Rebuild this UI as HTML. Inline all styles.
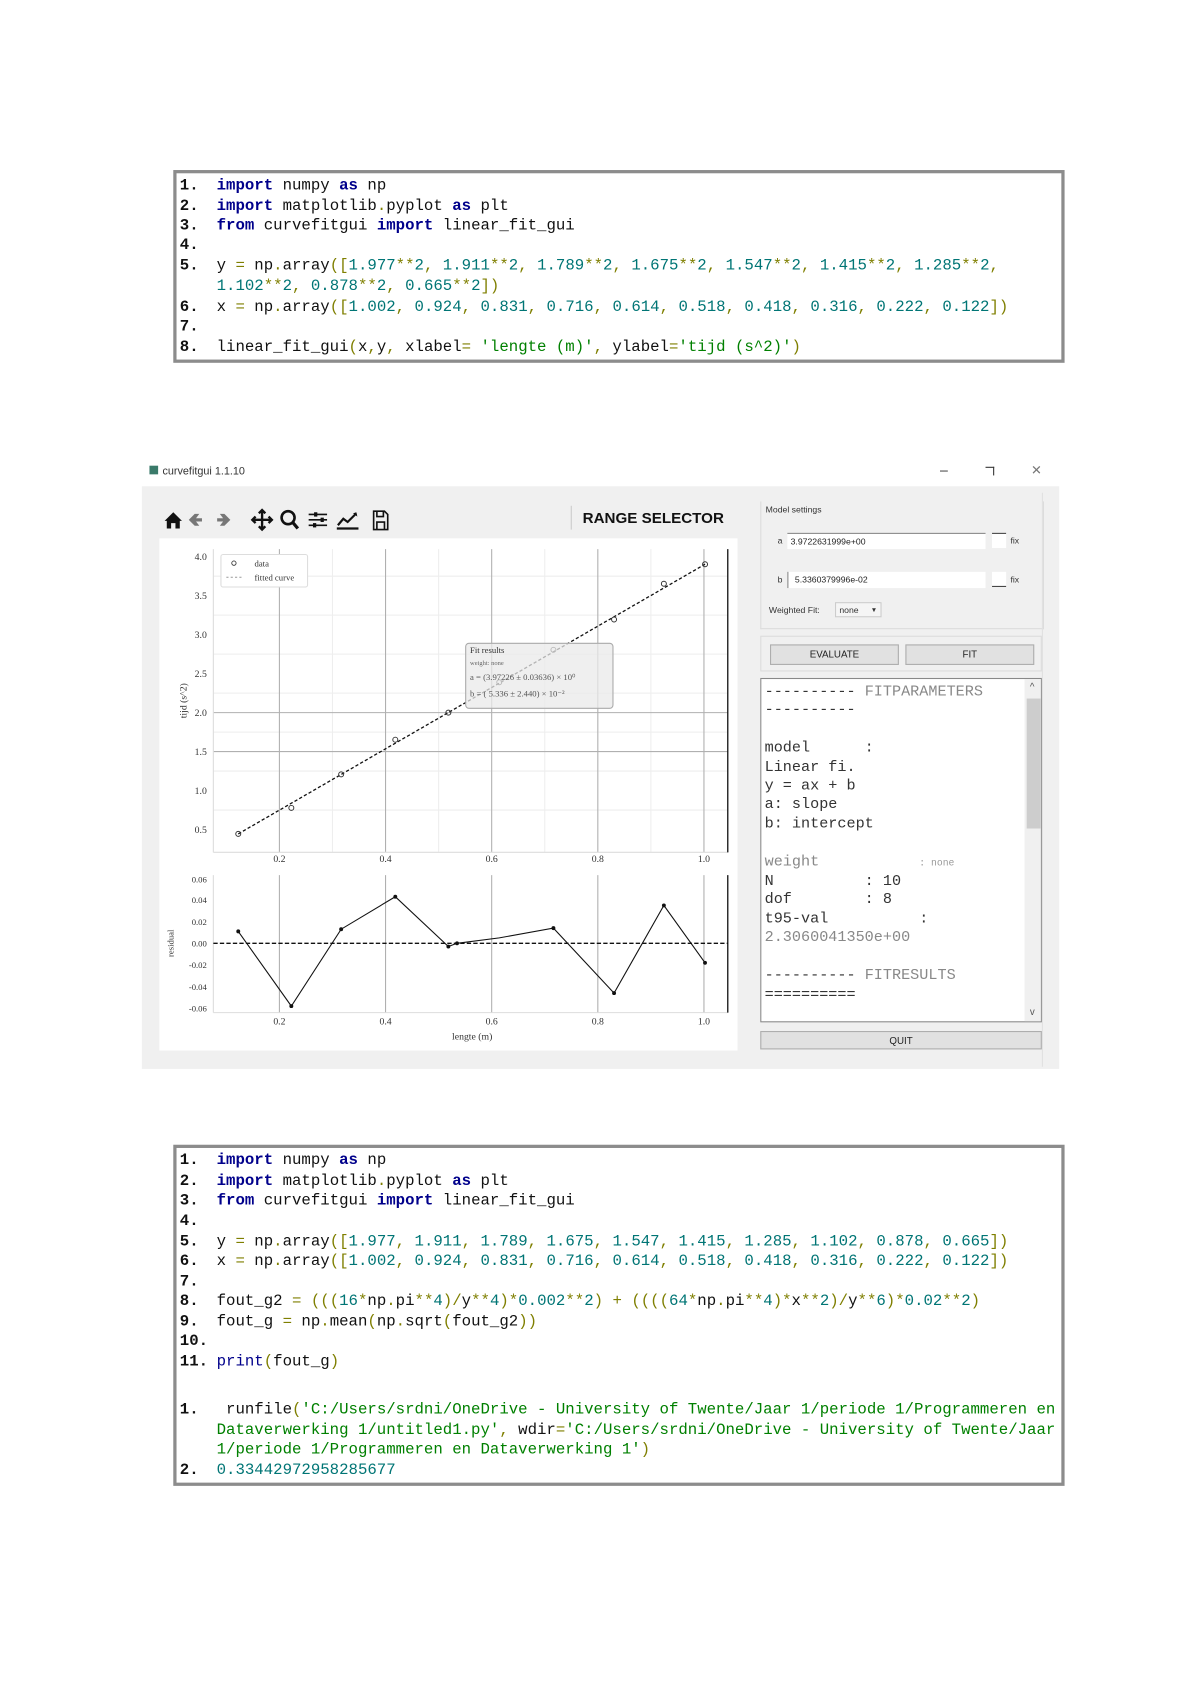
<!DOCTYPE html>
<html><head><meta charset="utf-8">
<style>
html,body{margin:0;padding:0;background:#fff;}
body{width:1200px;height:1698px;overflow:hidden;position:relative;}
#w{position:absolute;left:0;top:0;width:1108px;height:1568px;transform:scale(1.0830);transform-origin:0 0;}
.box{position:absolute;border:3px solid #8c8c8c;box-sizing:border-box;background:#fff;}
.ln{position:absolute;font-family:"Liberation Mono",monospace;font-size:14.5px;letter-spacing:0;white-space:pre;color:#111;line-height:18px;}
.n{font-weight:bold;position:absolute;left:-34px;}
.k{color:#00008b;font-weight:bold;}
.d{color:#007575;}
.p{color:#7f7f00;}
.s{color:#008000;}
.ab{position:absolute;}
.t{font-family:"Liberation Sans",sans-serif;}
.mono{font-family:"Liberation Mono",monospace;font-size:14px;color:#333;position:absolute;left:3px;white-space:pre;line-height:17.4px;}
.btn{position:absolute;background:#e1e1e1;border:1px solid #adadad;font-family:"Liberation Sans",sans-serif;font-size:9px;text-align:center;color:#222;}
</style></head><body>
<div id="w">

<div class="box" style="left:160px;top:157px;width:823px;height:178px;"></div>
<div class="ln" style="left:200px;top:163px"><span class="n">1.</span><span class="k">import</span> numpy <span class="k">as</span> np</div>
<div class="ln" style="left:200px;top:182px"><span class="n">2.</span><span class="k">import</span> matplotlib<span class="p">.</span>pyplot <span class="k">as</span> plt</div>
<div class="ln" style="left:200px;top:200px"><span class="n">3.</span><span class="k">from</span> curvefitgui <span class="k">import</span> linear_fit_gui</div>
<div class="ln" style="left:200px;top:218px"><span class="n">4.</span></div>
<div class="ln" style="left:200px;top:237px"><span class="n">5.</span>y <span class="p">=</span> np<span class="p">.</span>array<span class="p">([</span><span class="d">1.977</span><span class="p">**</span><span class="d">2</span><span class="p">,</span> <span class="d">1.911</span><span class="p">**</span><span class="d">2</span><span class="p">,</span> <span class="d">1.789</span><span class="p">**</span><span class="d">2</span><span class="p">,</span> <span class="d">1.675</span><span class="p">**</span><span class="d">2</span><span class="p">,</span> <span class="d">1.547</span><span class="p">**</span><span class="d">2</span><span class="p">,</span> <span class="d">1.415</span><span class="p">**</span><span class="d">2</span><span class="p">,</span> <span class="d">1.285</span><span class="p">**</span><span class="d">2</span><span class="p">,</span></div>
<div class="ln" style="left:200px;top:256px"><span class="d">1.102</span><span class="p">**</span><span class="d">2</span><span class="p">,</span> <span class="d">0.878</span><span class="p">**</span><span class="d">2</span><span class="p">,</span> <span class="d">0.665</span><span class="p">**</span><span class="d">2</span><span class="p">])</span></div>
<div class="ln" style="left:200px;top:275px"><span class="n">6.</span>x <span class="p">=</span> np<span class="p">.</span>array<span class="p">([</span><span class="d">1.002</span><span class="p">,</span> <span class="d">0.924</span><span class="p">,</span> <span class="d">0.831</span><span class="p">,</span> <span class="d">0.716</span><span class="p">,</span> <span class="d">0.614</span><span class="p">,</span> <span class="d">0.518</span><span class="p">,</span> <span class="d">0.418</span><span class="p">,</span> <span class="d">0.316</span><span class="p">,</span> <span class="d">0.222</span><span class="p">,</span> <span class="d">0.122</span><span class="p">])</span></div>
<div class="ln" style="left:200px;top:293px"><span class="n">7.</span></div>
<div class="ln" style="left:200px;top:312px"><span class="n">8.</span>linear_fit_gui<span class="p">(</span>x<span class="p">,</span>y<span class="p">,</span> xlabel<span class="p">=</span> <span class="s">'lengte (m)'</span><span class="p">,</span> ylabel<span class="p">=</span><span class="s">'tijd (s^2)'</span><span class="p">)</span></div>

<div class="ab t" style="left:138px;top:430px;font-size:10px;color:#333;"><span style="display:inline-block;width:8px;height:8px;background:#3a7a6a;margin-right:4px;"></span>curvefitgui 1.1.10</div>
<div class="ab t" style="left:868px;top:426px;font-size:13px;color:#333;">–</div>
<div class="ab" style="left:910px;top:431px;width:7px;height:7px;border-top:1.5px solid #333;border-right:1.5px solid #333;"></div>
<div class="ab t" style="left:952px;top:427px;font-size:12px;color:#777;">✕</div>

<div class="ab" style="left:131px;top:449px;width:847px;height:538px;background:#f0f0f0;"></div>

<svg class="ab" style="left:150px;top:469px" width="215" height="22" viewBox="0 0 215 22">
 <path d="M2 12 L10 4 L18 12 L16 12 L16 19 L12 19 L12 14 L8 14 L8 19 L4 19 L4 12 Z" fill="#111"/>
 <path d="M36 10 L30 10 L33 6 L30 6 L25 11 L30 16 L33 16 L30 12 L36 12 Z" fill="#777" stroke="#777" stroke-width="1"/>
 <path d="M51 10 L57 10 L54 6 L57 6 L62 11 L57 16 L54 16 L57 12 L51 12 Z" fill="#777" stroke="#777" stroke-width="1"/>
 <path d="M92 2 L92 20 M83 11 L101 11 M89 5 L92 2 L95 5 M89 17 L92 20 L95 17 M86 8 L83 11 L86 14 M98 8 L101 11 L98 14" stroke="#111" stroke-width="2.2" fill="none"/>
 <circle cx="116" cy="9" r="6" stroke="#111" stroke-width="2.4" fill="none"/>
 <path d="M120 13 L125 19" stroke="#111" stroke-width="3"/>
 <path d="M135 6 H152 M135 11 H152 M135 16 H152" stroke="#111" stroke-width="1.5"/>
 <rect x="140" y="4" width="3" height="4" fill="#111"/><rect x="146" y="9" width="3" height="4" fill="#111"/><rect x="139" y="14" width="3" height="4" fill="#111"/>
 <path d="M161 19 H181 M162 16 L167 10 L171 13 L179 5" stroke="#111" stroke-width="2" fill="none"/>
 <path d="M179 4 L180 8 L176 5 Z" fill="#111"/>
 <path d="M195 3 H205 L208 6 V20 H195 Z M198 3 V8 H204 V3 M198 20 V13 H205 V20" stroke="#111" stroke-width="1.5" fill="none"/>
</svg>
<div class="ab" style="left:527px;top:467px;width:1px;height:22px;background:#ccc;"></div>
<div class="ab t" style="left:538px;top:470px;font-size:14px;font-weight:bold;color:#111;">RANGE SELECTOR</div>

<svg class="ab" style="left:147px;top:497px" width="534" height="473" viewBox="147 497 534 473" font-family="Liberation Serif, serif">
 <rect x="147" y="497" width="534" height="473" fill="#fff"/>
 <g stroke="#eee" stroke-width="1">
  <line x1="197" y1="532" x2="672" y2="532"/><line x1="197" y1="568" x2="672" y2="568"/><line x1="197" y1="604" x2="672" y2="604"/><line x1="197" y1="640" x2="672" y2="640"/><line x1="197" y1="676" x2="672" y2="676"/><line x1="197" y1="712" x2="672" y2="712"/><line x1="197" y1="748" x2="672" y2="748"/>
  <line x1="307" y1="507" x2="307" y2="787"/><line x1="405" y1="507" x2="405" y2="787"/><line x1="503" y1="507" x2="503" y2="787"/><line x1="601" y1="507" x2="601" y2="787"/>
 </g>
 <g stroke="#b0b0b0" stroke-width="1">
  <line x1="258" y1="507" x2="258" y2="787"/><line x1="356" y1="507" x2="356" y2="787"/><line x1="454" y1="507" x2="454" y2="787"/><line x1="552" y1="507" x2="552" y2="787"/><line x1="650" y1="507" x2="650" y2="787"/>
  <line x1="197" y1="658" x2="672" y2="658"/><line x1="197" y1="694" x2="672" y2="694"/>
 </g>
 <line x1="197" y1="507" x2="197" y2="787" stroke="#ddd"/>
 <line x1="197" y1="787" x2="672" y2="787" stroke="#ddd"/>
 <line x1="672" y1="507" x2="672" y2="787" stroke="#111" stroke-width="1.2"/>
 <g font-size="9" fill="#333" text-anchor="end">
  <text x="191" y="517">4.0</text><text x="191" y="553">3.5</text><text x="191" y="589">3.0</text><text x="191" y="625">2.5</text><text x="191" y="661">2.0</text><text x="191" y="697">1.5</text><text x="191" y="733">1.0</text><text x="191" y="769">0.5</text>
 </g>
 <g font-size="9" fill="#333" text-anchor="middle">
  <text x="258" y="796">0.2</text><text x="356" y="796">0.4</text><text x="454" y="796">0.6</text><text x="552" y="796">0.8</text><text x="650" y="796">1.0</text>
 </g>
 <text x="172" y="647" font-size="9" fill="#333" transform="rotate(-90 172 647)" text-anchor="middle">tijd (s^2)</text>
 <rect x="204" y="512" width="80" height="30" fill="#fff" stroke="#ddd" rx="2"/>
 <circle cx="216" cy="520" r="2" fill="none" stroke="#333" stroke-width="0.8"/>
 <text x="235" y="523" font-size="8" fill="#333">data</text>
 <line x1="209" y1="533" x2="224" y2="533" stroke="#999" stroke-dasharray="2,2"/>
 <text x="235" y="536" font-size="8" fill="#333">fitted curve</text>
 <line x1="220" y1="770" x2="651" y2="521" stroke="#111" stroke-width="1.2" stroke-dasharray="3,2"/>
 <g fill="none" stroke="#333" stroke-width="0.9">
  <circle cx="651" cy="521" r="2.3"/><circle cx="613" cy="539" r="2.3"/><circle cx="567" cy="572" r="2.3"/><circle cx="511" cy="600" r="2.3"/><circle cx="461" cy="630" r="2.3"/><circle cx="414" cy="658" r="2.3"/><circle cx="365" cy="683" r="2.3"/><circle cx="315" cy="715" r="2.3"/><circle cx="269" cy="746" r="2.3"/><circle cx="220" cy="770" r="2.3"/>
 </g>
 <rect x="430" y="594" width="136" height="60" rx="3" fill="#eaeaea" fill-opacity="0.75" stroke="#aaa"/>
 <text x="434" y="603" font-size="8" fill="#333">Fit results</text>
 <text x="434" y="614" font-size="6" fill="#666">weight: none</text>
 <text x="434" y="628" font-size="8" fill="#555">a = (3.97226 ± 0.03636) × 10⁰</text>
 <text x="434" y="643" font-size="8" fill="#555">b = ( 5.336 ± 2.440) × 10⁻²</text>
 <g stroke="#b0b0b0">
  <line x1="258" y1="808" x2="258" y2="935"/><line x1="356" y1="808" x2="356" y2="935"/><line x1="454" y1="808" x2="454" y2="935"/><line x1="552" y1="808" x2="552" y2="935"/><line x1="650" y1="808" x2="650" y2="935"/>
 </g>
 <line x1="197" y1="808" x2="197" y2="935" stroke="#ddd"/>
 <line x1="197" y1="935" x2="672" y2="935" stroke="#ddd"/>
 <line x1="672" y1="808" x2="672" y2="935" stroke="#111" stroke-width="1.2"/>
 <line x1="197" y1="871" x2="672" y2="871" stroke="#111" stroke-width="1.2" stroke-dasharray="4,2"/>
 <g font-size="8" fill="#333" text-anchor="end">
  <text x="191" y="815">0.06</text><text x="191" y="834">0.04</text><text x="191" y="854">0.02</text><text x="191" y="874">0.00</text><text x="191" y="894">-0.02</text><text x="191" y="914">-0.04</text><text x="191" y="934">-0.06</text>
 </g>
 <g font-size="9" fill="#333" text-anchor="middle">
  <text x="258" y="946">0.2</text><text x="356" y="946">0.4</text><text x="454" y="946">0.6</text><text x="552" y="946">0.8</text><text x="650" y="946">1.0</text>
  <text x="436" y="960">lengte (m)</text>
 </g>
 <text x="160" y="871" font-size="8" fill="#333" transform="rotate(-90 160 871)" text-anchor="middle">residual</text>
 <polyline points="220,860 269,929 315,858 365,828 414,874 422,871 461,866 511,857 567,917 613,836 651,889" fill="none" stroke="#111" stroke-width="1"/>
 <g fill="#111"><circle cx="220" cy="860" r="1.8"/><circle cx="269" cy="929" r="1.8"/><circle cx="315" cy="858" r="1.8"/><circle cx="365" cy="828" r="1.8"/><circle cx="414" cy="874" r="1.8"/><circle cx="422" cy="871" r="1.8"/><circle cx="511" cy="857" r="1.8"/><circle cx="567" cy="917" r="1.8"/><circle cx="613" cy="836" r="1.8"/><circle cx="651" cy="889" r="1.8"/></g>
</svg>

<div class="ab" style="left:702px;top:463px;width:260px;height:117px;border:1px solid #dcdcdc;border-top:none;"></div>
<div class="ab" style="left:962px;top:455px;width:8px;height:530px;border-left:1px solid #e0e0e0;"></div>
<div class="ab t" style="left:707px;top:466px;font-size:8px;color:#333;">Model settings</div>
<div class="ab t" style="left:718px;top:495px;font-size:8px;color:#333;">a</div>
<div class="ab t" style="left:727px;top:492px;width:183px;height:15px;background:#fff;border-top:1px solid #888;font-size:8px;line-height:15px;color:#222;padding-left:3px;box-sizing:border-box;">3.9722631999e+00</div>
<div class="ab" style="left:916px;top:492px;width:13px;height:13px;background:#fff;border-top:1px solid #444;"></div>
<div class="ab t" style="left:933px;top:495px;font-size:8px;color:#333;">fix</div>
<div class="ab t" style="left:718px;top:531px;font-size:8px;color:#333;">b</div>
<div class="ab t" style="left:727px;top:528px;width:183px;height:15px;background:#fff;border-left:1px solid #888;font-size:8px;line-height:15px;color:#222;padding-left:6px;box-sizing:border-box;">5.3360379996e-02</div>
<div class="ab" style="left:916px;top:528px;width:13px;height:13px;background:#fff;border-bottom:1px solid #444;"></div>
<div class="ab t" style="left:933px;top:531px;font-size:8px;color:#333;">fix</div>
<div class="ab t" style="left:710px;top:559px;font-size:8px;color:#333;">Weighted Fit:</div>
<div class="ab t" style="left:771px;top:556px;width:43px;height:14px;border:1px solid #ccc;background:#f5f5f5;font-size:8px;line-height:14px;color:#333;padding-left:3px;box-sizing:border-box;">none <span style="float:right;margin-right:3px;font-size:6px;">▼</span></div>

<div class="ab" style="left:702px;top:587px;width:260px;height:33px;border:1px solid #dcdcdc;box-sizing:border-box;"></div>
<div class="btn" style="left:711px;top:595px;width:117px;height:17px;line-height:17px;">EVALUATE</div>
<div class="btn" style="left:836px;top:595px;width:117px;height:17px;line-height:17px;">FIT</div>

<div class="ab" style="left:702px;top:626px;width:260px;height:318px;background:#fff;border:1px solid #888;box-sizing:border-box;overflow:hidden;">
 <div class="mono" style="top:4px;">---------- <span style="color:#888">FITPARAMETERS</span>
----------

model      :
Linear fi.
y = ax + b
a: slope
b: intercept

<span style="color:#888">weight</span>           <span style="color:#999;font-size:9px">: none</span>
N          : 10
dof        : 8
t95-val          :
<span style="color:#888">2.3060041350e+00</span>

---------- <span style="color:#888">FITRESULTS</span>
==========</div>
 <div class="ab" style="left:243px;top:0;width:16px;height:316px;background:#f0f0f0;"></div>
 <div class="ab" style="left:245px;top:18px;width:13px;height:120px;background:#cdcdcd;"></div>
 <div class="ab t" style="left:248px;top:2px;font-size:9px;color:#555;">^</div>
 <div class="ab t" style="left:248px;top:302px;font-size:9px;color:#555;">v</div>
</div>
<div class="btn" style="left:702px;top:952px;width:260px;height:17px;line-height:17px;box-sizing:border-box;">QUIT</div>

<div class="box" style="left:160px;top:1057px;width:823px;height:315px;"></div>
<div class="ln" style="left:200px;top:1063px"><span class="n">1.</span><span class="k">import</span> numpy <span class="k">as</span> np</div>
<div class="ln" style="left:200px;top:1082px"><span class="n">2.</span><span class="k">import</span> matplotlib<span class="p">.</span>pyplot <span class="k">as</span> plt</div>
<div class="ln" style="left:200px;top:1100px"><span class="n">3.</span><span class="k">from</span> curvefitgui <span class="k">import</span> linear_fit_gui</div>
<div class="ln" style="left:200px;top:1119px"><span class="n">4.</span></div>
<div class="ln" style="left:200px;top:1138px"><span class="n">5.</span>y <span class="p">=</span> np<span class="p">.</span>array<span class="p">([</span><span class="d">1.977</span><span class="p">,</span> <span class="d">1.911</span><span class="p">,</span> <span class="d">1.789</span><span class="p">,</span> <span class="d">1.675</span><span class="p">,</span> <span class="d">1.547</span><span class="p">,</span> <span class="d">1.415</span><span class="p">,</span> <span class="d">1.285</span><span class="p">,</span> <span class="d">1.102</span><span class="p">,</span> <span class="d">0.878</span><span class="p">,</span> <span class="d">0.665</span><span class="p">])</span></div>
<div class="ln" style="left:200px;top:1156px"><span class="n">6.</span>x <span class="p">=</span> np<span class="p">.</span>array<span class="p">([</span><span class="d">1.002</span><span class="p">,</span> <span class="d">0.924</span><span class="p">,</span> <span class="d">0.831</span><span class="p">,</span> <span class="d">0.716</span><span class="p">,</span> <span class="d">0.614</span><span class="p">,</span> <span class="d">0.518</span><span class="p">,</span> <span class="d">0.418</span><span class="p">,</span> <span class="d">0.316</span><span class="p">,</span> <span class="d">0.222</span><span class="p">,</span> <span class="d">0.122</span><span class="p">])</span></div>
<div class="ln" style="left:200px;top:1175px"><span class="n">7.</span></div>
<div class="ln" style="left:200px;top:1193px"><span class="n">8.</span>fout_g2 <span class="p">= (((</span><span class="d">16</span><span class="p">*</span>np<span class="p">.</span>pi<span class="p">**</span><span class="d">4</span><span class="p">)/</span>y<span class="p">**</span><span class="d">4</span><span class="p">)*</span><span class="d">0.002</span><span class="p">**</span><span class="d">2</span><span class="p">) + ((((</span><span class="d">64</span><span class="p">*</span>np<span class="p">.</span>pi<span class="p">**</span><span class="d">4</span><span class="p">)*</span>x<span class="p">**</span><span class="d">2</span><span class="p">)/</span>y<span class="p">**</span><span class="d">6</span><span class="p">)*</span><span class="d">0.02</span><span class="p">**</span><span class="d">2</span><span class="p">)</span></div>
<div class="ln" style="left:200px;top:1212px"><span class="n">9.</span>fout_g <span class="p">=</span> np<span class="p">.</span>mean<span class="p">(</span>np<span class="p">.</span>sqrt<span class="p">(</span>fout_g2<span class="p">))</span></div>
<div class="ln" style="left:200px;top:1230px"><span class="n">10.</span></div>
<div class="ln" style="left:200px;top:1249px"><span class="n">11.</span><span class="k" style="font-weight:normal">print</span><span class="p">(</span>fout_g<span class="p">)</span></div>
<div class="ln" style="left:200px;top:1293px"><span class="n">1.</span> runfile<span class="p">(</span><span class="s">'C:/Users/srdni/OneDrive - University of Twente/Jaar 1/periode 1/Programmeren en</span></div>
<div class="ln" style="left:200px;top:1312px"><span class="s">Dataverwerking 1/untitled1.py'</span><span class="p">,</span> wdir<span class="p">=</span><span class="s">'C:/Users/srdni/OneDrive - University of Twente/Jaar</span></div>
<div class="ln" style="left:200px;top:1330px"><span class="s">1/periode 1/Programmeren en Dataverwerking 1'</span><span class="p">)</span></div>
<div class="ln" style="left:200px;top:1349px"><span class="n">2.</span><span class="d">0.33442972958285677</span></div>

</div>
</body></html>
